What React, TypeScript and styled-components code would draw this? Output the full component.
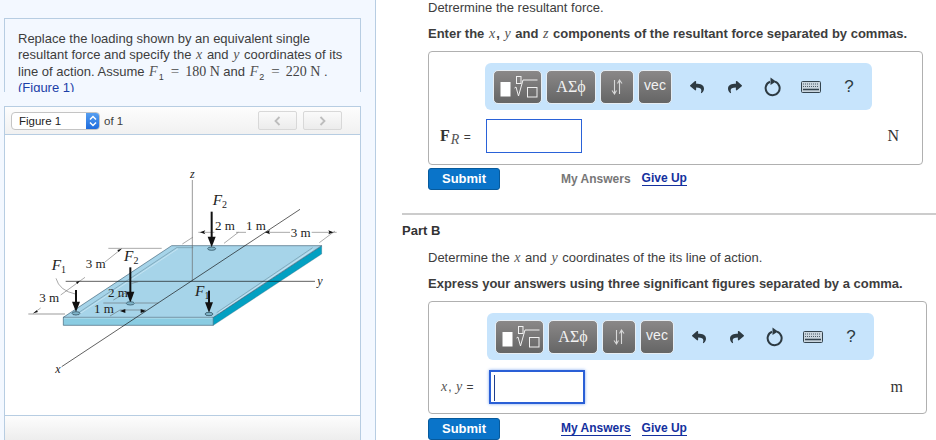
import React from 'react';
import styled, {createGlobalStyle} from 'styled-components';
import {FaReply, FaShare} from 'react-icons/fa';

const Global = createGlobalStyle`
  html, body {
    margin: 0;
    padding: 0;
    background: white;
  }
  body {
    font-family: "Liberation Sans", Arial, sans-serif;
    color: #3d3d3d;
  }
`

const Page = styled.div`
  display: flex;
  width: 936px;
  height: 440px;
  overflow: hidden;
`

const Aside = styled.aside`
  box-sizing: border-box;
  flex: 0 0 376px;
  height: 440px;
  padding: 18px 14px 0 4px;
  background: #f3f8ff;
  border-right: 1px solid #b7cde2;
  overflow: hidden;
`

const Statement = styled.div`
  box-sizing: border-box;
  height: 74px;
  padding: 12px 13px 0;
  border: 1px solid #b7cde2;
  border-bottom: none;
  font-size: 13px;
  line-height: 16px;
  overflow: hidden;
`

const FigureLink = styled.a`
  color: #1c3fa8;
`

const MathVar = styled.i`
  margin: 0 1px;
  font-family: "Liberation Serif", serif;
  font-size: 14px;
  font-weight: normal;
  color: #555;
`

const MathText = styled.span`
  font-family: "Liberation Serif", serif;
  font-size: 14px;
  color: #444;
`

const Equals = styled.span`
  margin: 0 6px 0 7px;
  font-family: "Liberation Serif", serif;
  font-size: 15px;
  color: #444;
`

const Sub = styled.sub`
  font-size: 9px;
  line-height: 0;
`

const FigurePanel = styled.div`
  margin-top: 14px;
  border: 1px solid #b7cde2;
  border-bottom: none;
  background: white;
`

const FigureBar = styled.div`
  box-sizing: border-box;
  height: 28px;
  display: flex;
  align-items: center;
  padding: 0 18px 0 6px;
  background: linear-gradient(#fdfdfd, #f1f1f1);
  border-bottom: 1px solid #b7cde2;
  font-size: 11.5px;
`

const Select = styled.div`
  box-sizing: border-box;
  width: 89px;
  height: 18px;
  display: flex;
  justify-content: space-between;
  padding-left: 7px;
  line-height: 16px;
  background: white;
  border: 1px solid #c4c4c4;
  border-radius: 4px;
  color: #222;
  overflow: hidden;
`

const SelectArrows = styled.span`
  width: 14px;
  margin: -1px -1px -1px 0;
  display: flex;
  align-items: center;
  justify-content: center;
  background: linear-gradient(#5aa2f2, #1a68dc);
`

const Of = styled.span`
  margin-left: 4px;
  margin-right: auto;
`

const NavButton = styled.div`
  box-sizing: border-box;
  width: 39px;
  height: 19px;
  margin-left: 6px;
  display: flex;
  align-items: center;
  justify-content: center;
  background: linear-gradient(#fafafa, #ececec);
  border: 1px solid #d8d8d8;
  border-radius: 2px;
`

const FigureBody = styled.div`
  box-sizing: border-box;
  height: 281px;
  padding: 25px 0 0 15px;
  border-bottom: 1px solid #b7cde2;
`

const FigureFoot = styled.div`
  height: 26px;
  background: linear-gradient(#fdfdfd, #ececec);
`

const Main = styled.main`
  flex: 1;
  padding-left: 26px;
`

const Part = styled.section`
  padding-left: 26px;
`

const Lead = styled.div`
  font-size: 13px;
  line-height: 16px;
`

const Para = styled.div`
  margin-top: 11px;
  font-size: 13px;
  line-height: 16px;
`

const Strong = styled.div`
  margin-top: 10px;
  font-size: 13px;
  font-weight: bold;
  line-height: 16px;
`

const AnswerBox = styled.div<{$width: number; $bottom: number}>`
  box-sizing: border-box;
  width: ${p => p.$width}px;
  margin-top: 9px;
  padding: 11px 0 ${p => p.$bottom}px;
  background: white;
  border: 1px solid #b0b0b0;
  border-radius: 4px;
`

const Toolbar = styled.div<{$indent: number; $gap: number}>`
  box-sizing: border-box;
  width: 387px;
  height: 47px;
  margin-left: ${p => p.$indent}px;
  margin-bottom: ${p => p.$gap}px;
  display: flex;
  align-items: center;
  padding-left: 8px;
  background: #c7e4fc;
  border-radius: 6px;
`

const ToolButton = styled.div<{$width: number}>`
  box-sizing: border-box;
  width: ${p => p.$width}px;
  height: 34px;
  margin-right: 4px;
  display: flex;
  align-items: center;
  justify-content: center;
  background: linear-gradient(#8a8888, #656565);
  border: 1px solid #e6edf3;
  border-radius: 5px;
  color: #f2f2f2;
`

const GreekLabel = styled.span`
  font-family: "Liberation Serif", serif;
  font-size: 16px;
`

const VecLabel = styled.span`
  font-size: 14px;
  margin-top: -3px;
`

const ToolIcons = styled.div`
  display: flex;
  margin-left: 2px;
  color: #2d3a42;
`

const ToolIcon = styled.div`
  width: 38px;
  height: 24px;
  display: flex;
  align-items: center;
  justify-content: center;
  font-size: 17px;
`

const InputRow = styled.div`
  display: flex;
  align-items: center;
`

const Label = styled.div<{$width: number}>`
  box-sizing: border-box;
  width: ${p => p.$width}px;
  padding-left: 11px;
  font-size: 12px;
  white-space: nowrap;
`

const BoldMath = styled.b`
  font-family: "Liberation Serif", serif;
  font-size: 16px;
  color: #333;
`

const AnswerField = styled.div<{$focused?: boolean}>`
  box-sizing: border-box;
  width: 96px;
  height: 34px;
  padding: 3px 3px;
  background: white;
  border: ${p => (p.$focused ? '2px solid #2a5fd6' : '1px solid #2a62d8')};
  box-shadow: ${p => (p.$focused ? '0 0 3px #7fa6ee' : 'none')};
`

const Caret = styled.div`
  width: 1px;
  height: 26px;
  background: #1d3f8f;
`

const Unit = styled.div<{$right: number}>`
  margin-left: auto;
  margin-right: ${p => p.$right}px;
  font-family: "Liberation Serif", serif;
  font-size: 16px;
  color: #333;
`

const Actions = styled.div<{$top: number}>`
  display: flex;
  align-items: center;
  margin-top: ${p => p.$top}px;
  font-size: 12px;
  font-weight: bold;
`

const SubmitButton = styled.button`
  box-sizing: border-box;
  width: 72px;
  height: 22px;
  margin-right: 61px;
  padding: 0 0 2px;
  font-family: inherit;
  font-size: 13px;
  font-weight: bold;
  color: white;
  background: #0a74c9;
  border: 1px solid #075a9c;
  border-radius: 3px;
`

const ActionLink = styled.a<{$muted?: boolean}>`
  margin-right: 11px;
  padding-bottom: 0;
  color: ${p => (p.$muted ? '#777' : '#14309e')};
  border-bottom: ${p => (p.$muted ? 'none' : '1px solid #14309e')};
  line-height: 13px;
`

const Rule = styled.hr`
  height: 2px;
  margin: 23px 0 0;
  border: none;
  background: #cccccc;
`

const PartTitle = styled.h3`
  margin: 8px 0 0;
  font-size: 13px;
  line-height: 16px;
  color: #333;
`

const Plate = () => (
  <svg width={330} height={230} viewBox="0 0 990 690">
    <polygon points="130,472 580,472 580,496 130,496" fill="#8accE2" stroke="#3f6478" strokeWidth={2}/>
    <polygon points="580,472 905,257 905,282 580,496" fill="#03a0c2" stroke="#3f6478" strokeWidth={1}/>
    <polygon points="130,472 455,257 905,257 580,472" fill="#a6d4e9" stroke="#3f6478" strokeWidth={2}/>
    <path d="M132 474 H578" stroke="#d6eef8" strokeWidth={2}/>
    <path d="M470 263 L165 465 M470 263 H520 M878 263 L590 458" stroke="#5f8090" strokeWidth={1.5} fill="none"/>
    <path d="M474 266 L172 466 M880 268 L596 458" stroke="#e3f3fa" strokeWidth={1.5} fill="none"/>
    <path d="M517 60 V362" stroke="#666" strokeWidth={2}/>
    <path d="M137 364 H885" stroke="#111" strokeWidth={2}/>
    <path d="M125 620 L840 148" stroke="#111" strokeWidth={2}/>
    <g stroke="#555" strokeWidth={1.5} fill="none">
      <path d="M535 217 H583 M648 217 H678 M735 217 H810 M875 217 H950"/>
      <path d="M487 252 L518 232 M612 250 L655 217 M898 248 L945 213"/>
      <path d="M25 462 H135" stroke="#888" strokeWidth={2.5}/>
      <path d="M40 460 L62 444 M122 405 L195 352 M255 306 L305 266"/>
      <path d="M265 265 H425"/>
      <path d="M108 355 Q118 392 166 402"/>
      <path d="M250 429 H318 M345 429 H415 M270 468 L300 450 H378 M280 420 L318 398 M335 370 L355 365"/>
    </g>
    <g fill="#111">
      <path d="M540 217 L556 211 L552 217 L556 223 Z M735 217 L750 211 L747 217 L750 223 Z M940 217 L925 211 L928 217 L925 223 Z"/>
      <path d="M40 460 L54 456 L50 451 Z M305 266 L292 270 L296 276 Z M180 362 L168 366 L172 372 Z"/>
      <path d="M300 453 L316 447 V459 Z M378 453 L362 447 V459 Z"/>
    </g>
    <g fill="#111">
      <rect x={572} y={155} width={6} height={78}/>
      <polygon points="563,230 587,230 575,262"/>
      <rect x={328} y={322} width={6} height={76}/>
      <polygon points="319,395 343,395 331,428"/>
      <rect x={165} y={390} width={6} height={38}/>
      <polygon points="156,425 180,425 168,456"/>
      <rect x={564} y={392} width={6} height={38}/>
      <polygon points="555,427 579,427 567,458"/>
    </g>
    <g fill="#7fb4c9" stroke="#23404f" strokeWidth={2}>
      <ellipse cx={575} cy={266} rx={12} ry={5}/>
      <ellipse cx={331} cy={430} rx={12} ry={5}/>
      <ellipse cx={168} cy={460} rx={12} ry={5}/>
      <ellipse cx={567} cy={462} rx={12} ry={5}/>
    </g>
    <g fontFamily="Liberation Serif, serif" fontSize={39} fill="#222">
      <text x={585} y={209}>2 m</text>
      <text x={678} y={209}>1 m</text>
      <text x={812} y={231}>3 m</text>
      <text x={197} y={325}>3 m</text>
      <text x={58} y={425}>3 m</text>
      <text x={264} y={410}>2 m</text>
      <text x={222} y={459}>1 m</text>
    </g>
    <g fontFamily="Liberation Serif, serif" fontStyle="italic" fill="#222">
      <text x={510} y={54} fontSize={36}>z</text>
      <text x={892} y={374} fontSize={36}>y</text>
      <text x={106} y={640} fontSize={36}>x</text>
      <text x={578} y={136} fontSize={46}>F<tspan fontSize={30} fontStyle="normal" dy={9}>2</tspan></text>
      <text x={312} y={304} fontSize={46}>F<tspan fontSize={30} fontStyle="normal" dy={9}>2</tspan></text>
      <text x={95} y={330} fontSize={46}>F<tspan fontSize={30} fontStyle="normal" dy={9}>1</tspan></text>
      <text x={525} y={408} fontSize={46}>F<tspan fontSize={30} fontStyle="normal" dy={9}>1</tspan></text>
    </g>
  </svg>
)

const TemplateIcon = () => (
  <svg width={47} height={32} viewBox="1 1 47 32">
    <rect x={7.5} y={12} width={10} height={14.5} fill="white"/>
    <g fill="none" stroke="#f0f0f0" strokeWidth={1}>
      <rect x={23.5} y={6.5} width={4.5} height={7}/>
      <path d="M21.5 18 L23 17 L25.5 26 L30 10 H44.5"/>
      <rect x={34.5} y={17.5} width={9.5} height={9.5}/>
    </g>
  </svg>
)

const ArrowsIcon = () => (
  <svg width={14} height={16} viewBox="0 0 14 16">
    <path d="M4.5 1 V15 M2 11.5 L4.5 15 L6.5 11.5 M9.5 15 V1 M7.5 4.5 L9.5 1 L12 4.5" fill="none" stroke="#d8d8d8" strokeWidth={1.1}/>
  </svg>
)

const ResetIcon = () => (
  <svg width={18} height={20} viewBox="0 0 18 20">
    <path d="M11 4.6 A7 7 0 1 1 6 4.7" fill="none" stroke="#2d3a42" strokeWidth={2}/>
    <path d="M6.5 0.5 L12 4.4 L6.5 8 Z" fill="#2d3a42"/>
  </svg>
)

const KeyboardIcon = () => (
  <svg width={20} height={12} viewBox="0 0 20 12">
    <rect x={0.5} y={0.5} width={19} height={11} rx={1} fill="#c9d5de" stroke="#33434e"/>
    <path d="M2 3 H18 M2 5.5 H18" stroke="#4c5c68" strokeWidth={1.2} strokeDasharray="1 1"/>
    <path d="M2 8.5 H18" stroke="#33434e" strokeWidth={1.5}/>
  </svg>
)

const Tools = () => (
  <>
    <ToolButton $width={49}><TemplateIcon/></ToolButton>
    <ToolButton $width={50}><GreekLabel>ΑΣϕ</GreekLabel></ToolButton>
    <ToolButton $width={34}><ArrowsIcon/></ToolButton>
    <ToolButton $width={34}><VecLabel>vec</VecLabel></ToolButton>
    <ToolIcons>
      <ToolIcon><FaReply size={14}/></ToolIcon>
      <ToolIcon><FaShare size={14}/></ToolIcon>
      <ToolIcon><ResetIcon/></ToolIcon>
      <ToolIcon><KeyboardIcon/></ToolIcon>
      <ToolIcon>?</ToolIcon>
    </ToolIcons>
  </>
)

function App() {
  return (
    <Page>
      <Global/>
      <Aside>
        <Statement>
          Replace the loading shown by an equivalent single resultant force and specify
          the <MathVar>x</MathVar> and <MathVar>y</MathVar> coordinates of its line of
          action. Assume <MathVar>F</MathVar><Sub>1</Sub><Equals>=</Equals><MathText>180 N</MathText> and <MathVar>F</MathVar><Sub>2</Sub><Equals>=</Equals><MathText>220 N</MathText> .
          <br/>
          <FigureLink>(Figure 1)</FigureLink>
        </Statement>
        <FigurePanel>
          <FigureBar>
            <Select>
              Figure 1
              <SelectArrows>
                <svg width={8} height={12} viewBox="0 0 8 12">
                  <path d="M1 4.5 L4 1.5 L7 4.5 M1 7.5 L4 10.5 L7 7.5" fill="none" stroke="white" strokeWidth={1.5}/>
                </svg>
              </SelectArrows>
            </Select>
            <Of>of 1</Of>
            <NavButton>
              <svg width={7} height={10} viewBox="0 0 7 10">
                <path d="M5.5 1 L1.5 5 L5.5 9" fill="none" stroke="#bdbdbd" strokeWidth={1.8}/>
              </svg>
            </NavButton>
            <NavButton>
              <svg width={7} height={10} viewBox="0 0 7 10">
                <path d="M1.5 1 L5.5 5 L1.5 9" fill="none" stroke="#bdbdbd" strokeWidth={1.8}/>
              </svg>
            </NavButton>
          </FigureBar>
          <FigureBody><Plate/></FigureBody>
          <FigureFoot/>
        </FigurePanel>
      </Aside>
      <Main>
        <Part>
          <Lead>Detrermine the resultant force.</Lead>
          <Strong>
            Enter the <MathVar>x</MathVar>, <MathVar>y</MathVar> and <MathVar>z</MathVar> components of the resultant force separated by commas.
          </Strong>
          <AnswerBox $width={495} $bottom={11}>
            <Toolbar $indent={56} $gap={9}><Tools/></Toolbar>
            <InputRow>
              <Label $width={57}><BoldMath>F</BoldMath><Sub><MathVar>R</MathVar></Sub> =</Label>
              <AnswerField/>
              <Unit $right={23}>N</Unit>
            </InputRow>
          </AnswerBox>
          <Actions $top={3}>
            <SubmitButton>Submit</SubmitButton>
            <ActionLink $muted>My Answers</ActionLink>
            <ActionLink>Give Up</ActionLink>
          </Actions>
        </Part>
        <Rule/>
        <PartTitle>Part B</PartTitle>
        <Part>
          <Para>Determine the <MathVar>x</MathVar> and <MathVar>y</MathVar> coordinates of the its line of action.</Para>
          <Strong>Express your answers using three significant figures separated by a comma.</Strong>
          <AnswerBox $width={499} $bottom={9}>
            <Toolbar $indent={58} $gap={10}><Tools/></Toolbar>
            <InputRow>
              <Label $width={60}><MathVar>x</MathVar>, <MathVar>y</MathVar> =</Label>
              <AnswerField $focused><Caret/></AnswerField>
              <Unit $right={23}>m</Unit>
            </InputRow>
          </AnswerBox>
          <Actions $top={4}>
            <SubmitButton>Submit</SubmitButton>
            <ActionLink>My Answers</ActionLink>
            <ActionLink>Give Up</ActionLink>
          </Actions>
        </Part>
      </Main>
    </Page>
  );
}

export default App;
